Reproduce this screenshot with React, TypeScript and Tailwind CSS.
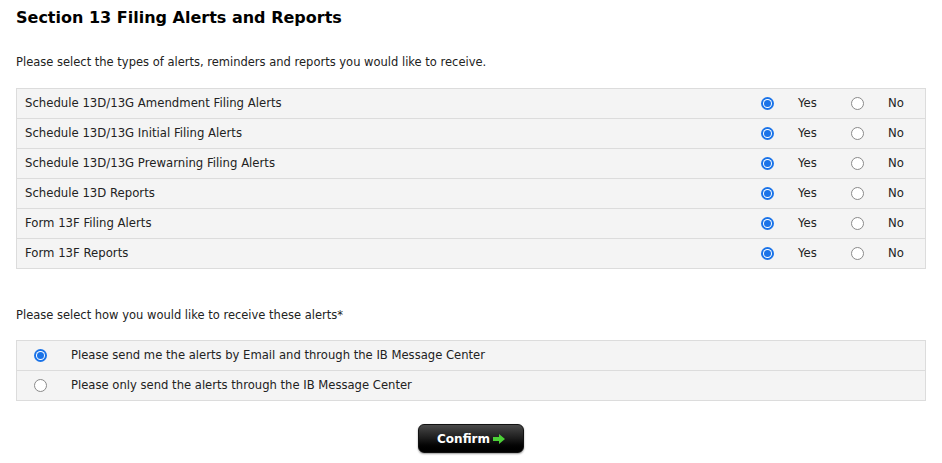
import React from "react";

const alertRows = [
  "Schedule 13D/13G Amendment Filing Alerts",
  "Schedule 13D/13G Initial Filing Alerts",
  "Schedule 13D/13G Prewarning Filing Alerts",
  "Schedule 13D Reports",
  "Form 13F Filing Alerts",
  "Form 13F Reports",
];

const deliveryRows = [
  "Please send me the alerts by Email and through the IB Message Center",
  "Please only send the alerts through the IB Message Center",
];

function Radio({ checked }: { checked: boolean }) {
  if (checked) {
    return (
      <span className="flex h-[13px] w-[13px] shrink-0 items-center justify-center rounded-full bg-[#1a73e8]">
        <span className="flex h-[9px] w-[9px] items-center justify-center rounded-full bg-white">
          <span className="h-[7px] w-[7px] rounded-full bg-[#1a73e8]" />
        </span>
      </span>
    );
  }
  return <span className="block h-[13px] w-[13px] shrink-0 rounded-full border border-[#8a8a8a] bg-white" />;
}

export default function App() {
  return (
    <div className="min-h-[463px] w-[942px] bg-white px-4 pt-[7px] font-['DejaVu_Sans',sans-serif] text-[#222]">
      <h1 className="text-[16px] leading-[22px] font-bold text-black">Section 13 Filing Alerts and Reports</h1>

      <p className="mt-[26px] text-[11.5px] leading-[14px]">
        Please select the types of alerts, reminders and reports you would like to receive.
      </p>

      <div className="mt-[19px] w-[910px] border border-[#dcdcdc]">
        {alertRows.map((label, i) => (
          <div
            key={label}
            className={`flex h-[29px] items-center bg-[#f4f4f4] text-[11.7px] ${i > 0 ? "border-t border-[#dcdcdc] h-[30px]" : ""}`}
          >
            <span className="flex-1 pl-2">{label}</span>
            <span className="flex w-[164px] items-center">
              <Radio checked />
              <span className="ml-[24px] w-[53px]">Yes</span>
              <Radio checked={false} />
              <span className="ml-[24px]">No</span>
            </span>
          </div>
        ))}
      </div>

      <p className="mt-[39px] text-[11.5px] leading-[14px]">Please select how you would like to receive these alerts*</p>

      <div className="mt-[18px] w-[910px] border border-[#dcdcdc]">
        {deliveryRows.map((label, i) => (
          <div
            key={label}
            className={`flex h-[29px] items-center bg-[#f4f4f4] text-[11.6px] ${i > 0 ? "border-t border-[#dcdcdc] h-[30px]" : ""}`}
          >
            <span className="ml-[17px]">
              <Radio checked={i === 0} />
            </span>
            <span className="ml-[24px]">{label}</span>
          </div>
        ))}
      </div>

      <div className="mt-[23px] flex justify-center">
        <button className="flex h-[29px] w-[106px] items-center justify-center gap-[3px] rounded-[6px] border border-[#111] bg-gradient-to-b from-[#4a4a4a] via-[#1c1c1c] to-[#000] text-[12px] font-bold text-white shadow-[0_1px_2px_rgba(0,0,0,0.4)]">
          Confirm
          <svg width="12" height="10" viewBox="0 0 12 10">
            <path d="M0 3h6V0l6 5-6 5V7H0z" fill="#4cd137" />
          </svg>
        </button>
      </div>
    </div>
  );
}
